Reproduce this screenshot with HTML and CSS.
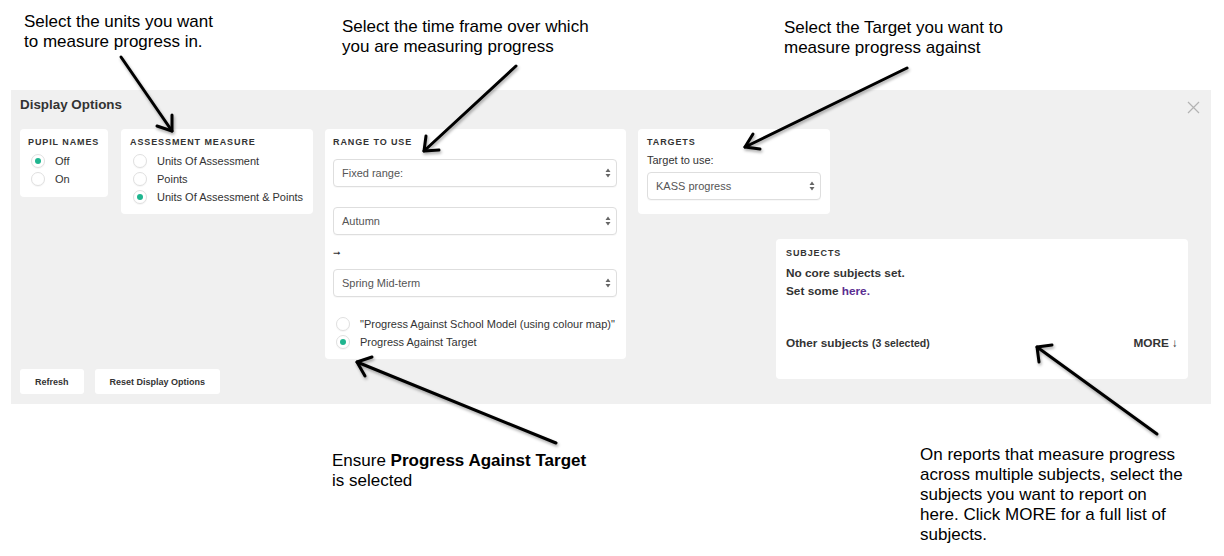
FILE: index.html
```html
<!DOCTYPE html>
<html lang="en">
<head>
<meta charset="utf-8">
<title>Display Options</title>
<link rel="stylesheet" href="styles.css">
</head>
<body>
<div class="note note-units">Select the units you want<br>to measure progress in.</div>
<div class="note note-time">Select the time frame over which<br>you are measuring progress</div>
<div class="note note-target">Select the Target you want to<br>measure progress against</div>

<section class="panel">
  <div class="panel-head">
    <h1 class="panel-title">Display Options</h1>
    <svg class="close" width="13" height="13" viewBox="0 0 13 13"><path d="M1 1L12 12M12 1L1 12" stroke="#b3b3b3" stroke-width="1.2" fill="none"/></svg>
  </div>
  <div class="panel-body">
    <div class="col-left">
      <div class="card-row">
        <div class="card card-pupil">
          <div class="card-h">PUPIL NAMES</div>
          <div class="radio-list">
            <div class="radio"><span class="dot on"></span>Off</div>
            <div class="radio"><span class="dot"></span>On</div>
          </div>
        </div>
        <div class="card card-assess">
          <div class="card-h">ASSESSMENT MEASURE</div>
          <div class="radio-list">
            <div class="radio"><span class="dot"></span>Units Of Assessment</div>
            <div class="radio"><span class="dot"></span>Points</div>
            <div class="radio"><span class="dot on"></span>Units Of Assessment &amp; Points</div>
          </div>
        </div>
      </div>
      <div class="buttons">
        <div class="btn">Refresh</div>
        <div class="btn">Reset Display Options</div>
      </div>
    </div>

    <div class="card card-range">
      <div class="card-h">RANGE TO USE</div>
      <div class="select sel-first"><span>Fixed range:</span><svg width="6" height="10" viewBox="0 0 6 10"><path d="M0.5 4L3 0.5L5.5 4Z M0.5 6L3 9.5L5.5 6Z" fill="#666"/></svg></div>
      <div class="select sel-second"><span>Autumn</span><svg width="6" height="10" viewBox="0 0 6 10"><path d="M0.5 4L3 0.5L5.5 4Z M0.5 6L3 9.5L5.5 6Z" fill="#666"/></svg></div>
      <div class="range-arrow">&#10142;</div>
      <div class="select"><span>Spring Mid-term</span><svg width="6" height="10" viewBox="0 0 6 10"><path d="M0.5 4L3 0.5L5.5 4Z M0.5 6L3 9.5L5.5 6Z" fill="#666"/></svg></div>
      <div class="radio-list range-radios">
        <div class="radio"><span class="dot"></span>"Progress Against School Model (using colour map)"</div>
        <div class="radio"><span class="dot on"></span>Progress Against Target</div>
      </div>
    </div>

    <div class="col-right">
      <div class="card card-targets">
        <div class="card-h">TARGETS</div>
        <div class="label">Target to use:</div>
        <div class="select sel-target"><span>KASS progress</span><svg width="6" height="10" viewBox="0 0 6 10"><path d="M0.5 4L3 0.5L5.5 4Z M0.5 6L3 9.5L5.5 6Z" fill="#666"/></svg></div>
      </div>
      <div class="card card-subjects">
        <div class="card-h">SUBJECTS</div>
        <div class="subj-line first">No core subjects set.</div>
        <div class="subj-line">Set some <a class="link" href="#">here.</a></div>
        <div class="other-row">
          <div class="other">Other subjects <span class="small">(3 selected)</span></div>
          <div class="more">MORE &#8595;</div>
        </div>
      </div>
    </div>
  </div>
</section>

<div class="note note-ensure">Ensure <b>Progress Against Target</b><br>is selected</div>
<div class="note note-reports">On reports that measure progress<br>across multiple subjects, select the<br>subjects you want to report on<br>here. Click MORE for a full list of<br>subjects.</div>

<svg class="arrows" width="1224" height="556" viewBox="0 0 1224 556">
  <defs>
    <filter id="sh" x="-20%" y="-20%" width="140%" height="140%">
      <feDropShadow dx="1" dy="2" stdDeviation="1.5" flood-color="#000" flood-opacity="0.35"/>
    </filter>
  </defs>
  <g filter="url(#sh)" stroke="#000" stroke-width="3" stroke-linecap="round" stroke-linejoin="round" fill="none">
    <path d="M121 57L172 131"/>
    <path d="M157 126L172 131L172 115"/>
    <path d="M516 66L424 151"/>
    <path d="M426 136L424 151L439 150"/>
    <path d="M907 68L745 147"/>
    <path d="M753 134L745 147L760 149"/>
    <path d="M556 443L357 362"/>
    <path d="M365 376L357 362L372 357"/>
    <path d="M1157 434L1037 347"/>
    <path d="M1039 362L1037 347L1052 345"/>
  </g>
</svg>
</body>
</html>
```

FILE: styles.css
```css
html, body {
  margin: 0;
  padding: 0;
}
body {
  width: 1224px;
  height: 556px;
  background: #ffffff;
  position: relative;
  overflow: hidden;
  font-family: "Liberation Sans", Arial, sans-serif;
  color: #333;
  padding-top: 90px;
  box-sizing: border-box;
}

/* annotation callouts */
.note {
  position: absolute;
  font-family: "Liberation Sans", Arial, sans-serif;
  font-size: 17px;
  line-height: 20px;
  color: #000;
  white-space: nowrap;
}
.note-units { left: 24px; top: 12px; }
.note-time { left: 342px; top: 17px; }
.note-target { left: 784px; top: 18px; }
.note-ensure { left: 332px; top: 451px; }
.note-reports { left: 920px; top: 445px; }

.arrows {
  position: absolute;
  left: 0;
  top: 0;
  pointer-events: none;
}

/* panel */
.panel {
  margin-left: 11px;
  width: 1200px;
  height: 314px;
  box-sizing: border-box;
  background: #f0f0f0;
  padding: 5px 11px 10px 9px;
  display: flex;
  flex-direction: column;
}
.panel-head {
  display: flex;
  justify-content: space-between;
  align-items: center;
  height: 20px;
  margin-bottom: 14px;
}
.panel-title {
  margin: 0;
  font-size: 13.4px;
  line-height: 20px;
  font-weight: bold;
  color: #333;
}
.close {
  display: block;
  margin-top: 4px;
}
.panel-body {
  flex: 1;
  display: flex;
  gap: 12px;
  align-items: stretch;
}

.col-left {
  width: 293px;
  display: flex;
  flex-direction: column;
}
.card-row {
  display: flex;
  gap: 13px;
  align-items: flex-start;
}

.card {
  background: #fff;
  border-radius: 4px;
  box-sizing: border-box;
}
.card-h {
  font-size: 9px;
  line-height: 14px;
  font-weight: bold;
  letter-spacing: 0.9px;
  color: #333;
}

.card-pupil {
  width: 88px;
  padding: 6px 8px 9px 8px;
}
.card-assess {
  width: 192px;
  padding: 6px 9px 8px 9px;
}

.radio-list {
  margin-top: 3px;
  margin-left: 3px;
}
.radio {
  display: flex;
  align-items: center;
  height: 18px;
  font-size: 11px;
  color: #333;
  white-space: nowrap;
}
.dot {
  width: 14px;
  height: 14px;
  box-sizing: border-box;
  border: 1px solid #e0e0e0;
  border-radius: 50%;
  background: #fff;
  margin-right: 10px;
  flex: none;
  position: relative;
  box-shadow: 0 1px 1px rgba(0,0,0,0.04);
}
.dot.on::after {
  content: "";
  position: absolute;
  left: 3px;
  top: 3px;
  width: 6px;
  height: 6px;
  border-radius: 50%;
  background: #1fb58f;
}

.buttons {
  margin-top: auto;
  display: flex;
  gap: 11px;
}
.btn {
  height: 25px;
  padding: 0 15px;
  background: #fff;
  border-radius: 3px;
  font-size: 9px;
  font-weight: bold;
  color: #333;
  display: flex;
  align-items: center;
  justify-content: center;
}

/* range */
.card-range {
  width: 301px;
  align-self: flex-start;
  padding: 6px 9px 8px 8px;
}
.select {
  height: 28px;
  box-sizing: border-box;
  border: 1px solid #dedede;
  border-radius: 4px;
  background: #fff;
  display: flex;
  align-items: center;
  justify-content: space-between;
  padding: 0 5px 0 8px;
  font-size: 11px;
  color: #555;
  box-shadow: 0 1px 1px rgba(0,0,0,0.03);
}
.select svg { display: block; }
.sel-first { margin-top: 10px; }
.sel-second { margin-top: 20px; }
.range-arrow {
  margin-top: 10px;
  margin-bottom: 8px;
  height: 16px;
  line-height: 16px;
  font-size: 9px;
  color: #333;
}
.range-radios {
  margin-top: 18px;
}

/* right column */
.col-right {
  width: 550px;
  display: flex;
  flex-direction: column;
  align-items: flex-start;
}
.card-targets {
  width: 192px;
  padding: 6px 9px 14px 9px;
}
.label {
  margin-top: 3px;
  font-size: 11px;
  line-height: 16px;
  color: #333;
}
.sel-target { margin-top: 4px; }

.card-subjects {
  width: 412px;
  align-self: flex-end;
  margin-top: 25px;
  padding: 7px 10px 27px 10px;
}
.subj-line {
  font-size: 11.8px;
  line-height: 18px;
  font-weight: bold;
  color: #333;
}
.subj-line.first { margin-top: 4px; }
.link {
  color: #5a2d91;
  text-decoration: none;
}
.other-row {
  margin-top: 34px;
  height: 18px;
  display: flex;
  justify-content: space-between;
  align-items: center;
}
.other {
  font-size: 11.8px;
  font-weight: bold;
  color: #333;
}
.other .small {
  font-size: 10.5px;
}
.more {
  font-size: 11.8px;
  font-weight: bold;
  color: #333;
}
```
